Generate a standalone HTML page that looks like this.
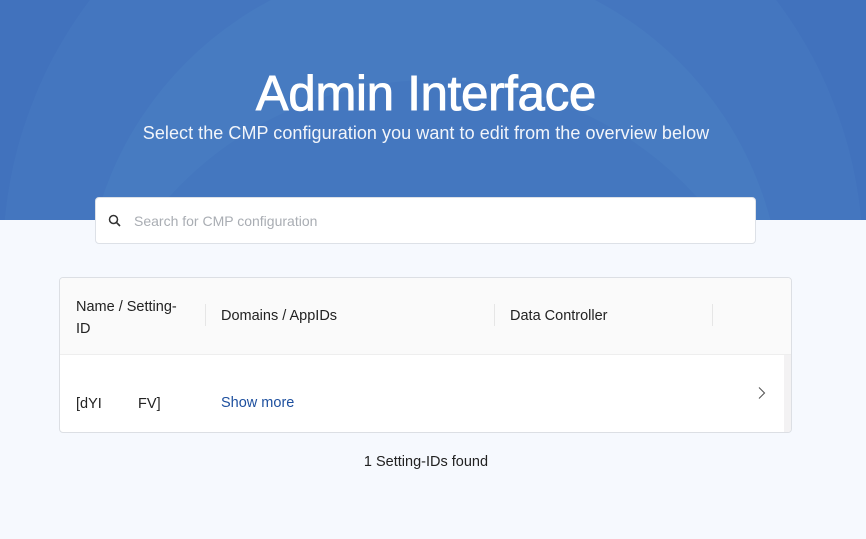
<!DOCTYPE html>
<html><head><meta charset="utf-8"><style>
*{box-sizing:border-box;margin:0;padding:0}
html{overflow:hidden}
body{width:866px;height:539px;overflow:hidden;background:#f6f9fe;font-family:"Liberation Sans",sans-serif;position:relative}
.hero{position:absolute;left:0;top:0;width:866px;height:220px;background:#4172bd;overflow:hidden}
.arc{position:absolute;border-radius:50%}
h1{position:absolute;top:66px;left:0;width:852px;text-align:center;color:#fff;font-size:49px;font-weight:400;-webkit-text-stroke:0.9px #fff;letter-spacing:-0.2px}
.sub{position:absolute;top:123px;left:0;width:852px;text-align:center;color:#f2f5fa;font-size:18px;letter-spacing:0.05px}
.search{position:absolute;left:95px;top:197px;width:661px;height:47px;background:#fff;border:1px solid #dde1e7;border-radius:4px}
.search span{position:absolute;left:38px;top:15px;color:#a9adb3;font-size:14px}
.card{position:absolute;left:59px;top:277px;width:733px;height:156px;background:#fff;border:1px solid #dcdfe4;border-radius:4px;overflow:hidden}
.head{position:absolute;left:0;top:0;width:731px;height:77px;background:#fafafa;border-bottom:1px solid #eee}
.t{position:absolute;font-size:14.5px;color:#222}
.sep{position:absolute;top:26px;width:1px;height:22px;background:#e6e6e6}
.sb{position:absolute;left:724px;top:77px;width:7px;height:78px;background:#f3f2f3}
</style></head><body>
<div class="hero">
<div class="arc" style="left:3px;top:-171px;width:860px;height:860px;background:#4476bf"></div>
<div class="arc" style="left:84px;top:-40px;width:698px;height:698px;background:#477bc1"></div>
<div class="arc" style="left:77px;top:80px;width:712px;height:712px;background:#4477bf"></div>
<h1>Admin Interface</h1>
<div class="sub">Select the CMP configuration you want to edit from the overview below</div>
</div>
<div class="search"><svg style="position:absolute;left:12px;top:16px" width="14" height="14" viewBox="0 0 14 14"><circle cx="5.5" cy="5.5" r="4" fill="none" stroke="#333" stroke-width="1.5"/><path d="M8.5 8.5L12 12" stroke="#333" stroke-width="1.6"/></svg><span>Search for CMP configuration</span></div>
<div class="card">
<div class="head">
<div class="t" style="left:16px;top:18px;line-height:22px;width:125px">Name / Setting-<br>ID</div>
<div class="sep" style="left:145px"></div>
<div class="t" style="left:161px;top:30px">Domains / AppIDs</div>
<div class="sep" style="left:434px"></div>
<div class="t" style="left:450px;top:30px">Data Controller</div>
<div class="sep" style="left:652px"></div>
</div>
<div class="t" style="left:16px;top:118px">[dYI&nbsp;&nbsp;&nbsp;&nbsp;&nbsp;&nbsp;&nbsp;&nbsp;&nbsp;FV]</div>
<div class="t" style="left:161px;top:117px;color:#1d4f9e">Show more</div>
<svg style="position:absolute;left:698px;top:108px" width="8" height="14" viewBox="0 0 8 14"><path d="M1 1.5L6.5 7L1 12.5" fill="none" stroke="#555" stroke-width="1.1"/></svg>
<div class="sb"></div>
</div>
<div class="t" style="left:0;width:852px;text-align:center;top:454px;color:#222">1 Setting-IDs found</div>
</body></html>
